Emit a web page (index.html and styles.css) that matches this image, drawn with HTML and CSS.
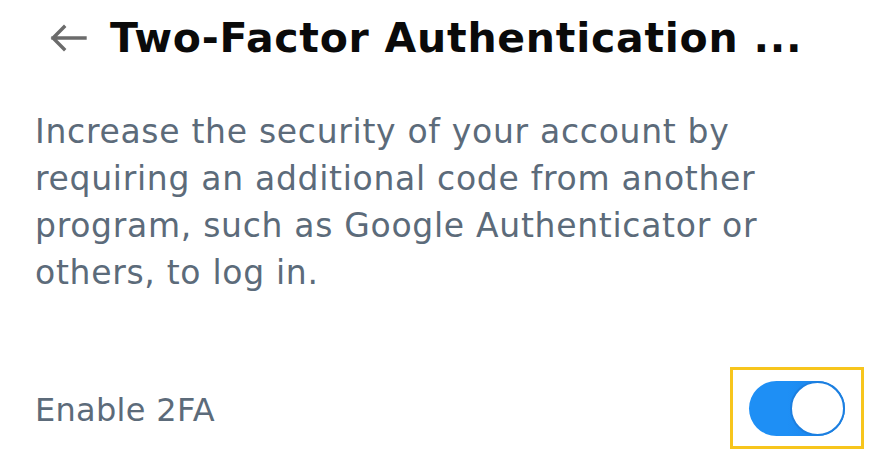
FILE: index.html
```html
<!DOCTYPE html>
<html>
<head>
<meta charset="utf-8">
<link rel="stylesheet" href="styles.css">
</head>
<body>
<div class="page">
  <header class="header">
    <svg class="back" width="40" height="28" viewBox="0 0 40 28">
      <path d="M37 14 H5 M16 3 L5 14 L16 25" fill="none" stroke="#6b6b6b" stroke-width="3.4" stroke-linecap="square"/>
    </svg>
    <h1 class="title">Two-Factor Authentication ...</h1>
  </header>
  <p class="desc">Increase the security of your account by requiring an additional code from another program, such as Google Authenticator or others, to log in.</p>
  <div class="row">
    <span class="label">Enable 2FA</span>
    <div class="focus">
      <div class="switch"><div class="knob"></div></div>
    </div>
  </div>
</div>
</body>
</html>
```
FILE: styles.css
```css
html, body { margin: 0; padding: 0; background: #fff; }
.page { width: 882px; height: 459px; overflow: hidden; font-family: "DejaVu Sans", sans-serif; }
.header { display: flex; align-items: center; padding: 14px 0 0 48px; height: 48px; gap: 22px; }
.back { flex: none; }
.title { margin: 0; font-size: 41px; font-weight: 700; color: #0a0a0a; letter-spacing: 0.75px; white-space: nowrap; }
.desc { margin: 46px 0 0 35px; width: 780px; font-size: 33px; line-height: 47px; letter-spacing: 0.7px; color: #5c6b7a; }
.row { display: flex; justify-content: space-between; align-items: center; margin-top: 71px; padding: 0 18px 0 35px; }
.label { font-size: 32px; color: #5c6b7a; letter-spacing: 0.3px; padding-top: 4px; }
.focus { border: 3px solid #f7c51c; width: 128px; height: 76px; display: flex; align-items: center; justify-content: center; }
.switch { width: 96px; height: 55px; border-radius: 28px; background: linear-gradient(90deg, #1e8ff5 40%, #1a7fe6); position: relative; }
.knob { position: absolute; right: 0; top: 0; width: 51px; height: 51px; border-radius: 50%; background: #fff; border: 2px solid #1c7fe0; }
```
